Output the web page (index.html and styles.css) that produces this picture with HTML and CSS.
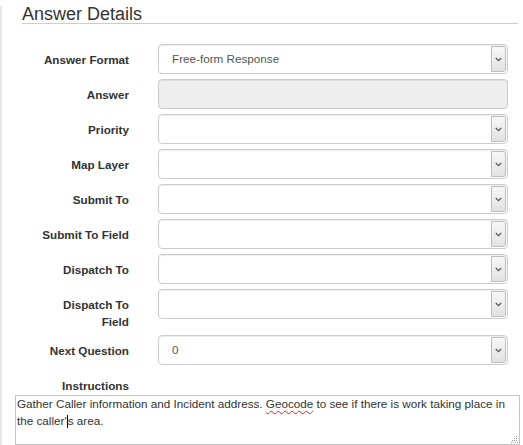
FILE: index.html
```html
<!DOCTYPE html>
<html lang="en">
<head>
<meta charset="utf-8">
<title>Answer Details</title>
<link rel="stylesheet" href="styles.css">
</head>
<body>
<div class="panel">
  <h2 class="heading">Answer Details</h2>
  <div class="form">
    <div class="row">
      <label class="label">Answer Format</label>
      <div class="select"><span class="select-value">Free-form Response</span><span class="select-btn"><svg width="7" height="5" viewBox="0 0 7 5"><path d="M0.8 1 L3.5 3.6 L6.2 1" fill="none" stroke="#555" stroke-width="1.2"/></svg></span></div>
    </div>
    <div class="row">
      <label class="label">Answer</label>
      <div class="input disabled"></div>
    </div>
    <div class="row">
      <label class="label">Priority</label>
      <div class="select"><span class="select-value"></span><span class="select-btn"><svg width="7" height="5" viewBox="0 0 7 5"><path d="M0.8 1 L3.5 3.6 L6.2 1" fill="none" stroke="#555" stroke-width="1.2"/></svg></span></div>
    </div>
    <div class="row">
      <label class="label">Map Layer</label>
      <div class="select"><span class="select-value"></span><span class="select-btn"><svg width="7" height="5" viewBox="0 0 7 5"><path d="M0.8 1 L3.5 3.6 L6.2 1" fill="none" stroke="#555" stroke-width="1.2"/></svg></span></div>
    </div>
    <div class="row">
      <label class="label">Submit To</label>
      <div class="select"><span class="select-value"></span><span class="select-btn"><svg width="7" height="5" viewBox="0 0 7 5"><path d="M0.8 1 L3.5 3.6 L6.2 1" fill="none" stroke="#555" stroke-width="1.2"/></svg></span></div>
    </div>
    <div class="row">
      <label class="label">Submit To Field</label>
      <div class="select"><span class="select-value"></span><span class="select-btn"><svg width="7" height="5" viewBox="0 0 7 5"><path d="M0.8 1 L3.5 3.6 L6.2 1" fill="none" stroke="#555" stroke-width="1.2"/></svg></span></div>
    </div>
    <div class="row">
      <label class="label">Dispatch To</label>
      <div class="select"><span class="select-value"></span><span class="select-btn"><svg width="7" height="5" viewBox="0 0 7 5"><path d="M0.8 1 L3.5 3.6 L6.2 1" fill="none" stroke="#555" stroke-width="1.2"/></svg></span></div>
    </div>
    <div class="row">
      <label class="label">Dispatch To Field</label>
      <div class="select"><span class="select-value"></span><span class="select-btn"><svg width="7" height="5" viewBox="0 0 7 5"><path d="M0.8 1 L3.5 3.6 L6.2 1" fill="none" stroke="#555" stroke-width="1.2"/></svg></span></div>
    </div>
    <div class="row">
      <label class="label">Next Question</label>
      <div class="select"><span class="select-value">0</span><span class="select-btn"><svg width="7" height="5" viewBox="0 0 7 5"><path d="M0.8 1 L3.5 3.6 L6.2 1" fill="none" stroke="#555" stroke-width="1.2"/></svg></span></div>
    </div>
    <div class="row">
      <label class="label">Instructions</label>
    </div>
  </div>
  <div class="textarea">
    <div class="textarea-text">Gather Caller information and Incident address. <span class="misspelled">Geocode</span> to see if there is work taking place in the caller'<span class="caret"></span>s area.</div>
    <svg class="grip" width="7" height="7" viewBox="0 0 7 7"><g fill="#999"><rect x="5" y="0" width="1" height="1"/><rect x="3" y="2" width="1" height="1"/><rect x="5" y="2" width="1" height="1"/><rect x="1" y="4" width="1" height="1"/><rect x="3" y="4" width="1" height="1"/><rect x="5" y="4" width="1" height="1"/><rect x="0" y="6" width="1" height="1"/><rect x="2" y="6" width="1" height="1"/><rect x="4" y="6" width="1" height="1"/><rect x="6" y="6" width="1" height="1"/></g></svg>
  </div>
</div>
</body>
</html>
```

FILE: styles.css
```css
html, body {
  margin: 0;
  padding: 0;
  background: #fff;
}

body {
  font-family: "Liberation Sans", Arial, sans-serif;
  color: #333;
  overflow: hidden;
}

.panel {
  border-left: 2px solid #e6e6e6;
  min-height: 445px;
  box-sizing: border-box;
}

.heading {
  margin: 6px 5px 0 20px;
  font-size: 18px;
  font-weight: normal;
  line-height: 17px;
  color: #333;
  border-bottom: 1px solid #ccc;
}

.form {
  margin-top: 20px;
  display: flex;
  flex-direction: column;
  gap: 5px;
}

.row {
  display: grid;
  grid-template-columns: 127px 350px;
  column-gap: 29px;
  align-items: start;
}

.label {
  padding: 7px 0 0 35px;
  text-align: right;
  font-weight: bold;
  font-size: 11.7px;
  line-height: 17px;
  color: #333;
}

.select,
.input {
  height: 30px;
  box-sizing: border-box;
  border: 1px solid #ccc;
  border-radius: 4px;
  box-shadow: inset 0 1px 1px rgba(0, 0, 0, 0.075);
  background: #fff;
}

.input.disabled {
  background: #eee;
}

.select {
  display: flex;
}

.select-value {
  flex: 1;
  padding-left: 13px;
  font-size: 11.7px;
  line-height: 28px;
  color: #555;
}

.select-btn {
  width: 13px;
  margin: 1px;
  border: 1px solid #bdbdbd;
  border-radius: 0 3px 3px 0;
  background: linear-gradient(#f7f7f7, #e2e2e2);
  display: flex;
  align-items: center;
  justify-content: center;
}

.textarea {
  position: relative;
  margin: 1px 0 0 13px;
  width: 505px;
  height: 50px;
  box-sizing: border-box;
  border: 1px solid #c4c4c4;
  overflow: hidden;
}

.textarea-text {
  margin-top: -1px;
  padding-left: 1px;
  font-size: 11.7px;
  line-height: 17px;
  color: #333;
}

.misspelled {
  text-decoration: underline wavy #e02020;
  text-decoration-thickness: 1px;
  text-underline-offset: 2px;
}

.caret {
  display: inline-block;
  width: 1px;
  height: 13px;
  background: #000;
  vertical-align: -3px;
}

.grip {
  position: absolute;
  right: 1px;
  bottom: 1px;
}
```
